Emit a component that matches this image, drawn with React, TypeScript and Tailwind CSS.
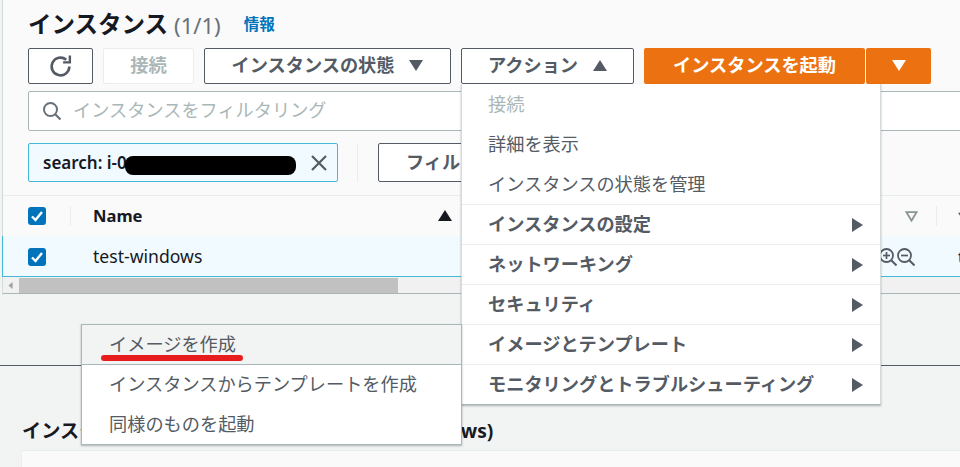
import React from "react";

const Tri = ({ d, className }: { d: "up" | "down" | "right"; className: string }) => {
  const p = d === "up" ? "M7 1 L14 12 L0 12 Z" : d === "down" ? "M0 1 L14 1 L7 12 Z" : "M1 0 L12 7 L1 14 Z";
  return (
    <svg viewBox="0 0 14 14" className={className} aria-hidden="true">
      <path d={p} fill="currentColor" />
    </svg>
  );
};

const Check = () => (
  <span className="flex h-[18px] w-[18px] shrink-0 items-center justify-center rounded-[3px] bg-[#0073bb]">
    <svg viewBox="0 0 18 18" className="h-[18px] w-[18px]" aria-hidden="true">
      <path d="M4 9.5 L7.5 13 L14 5" fill="none" stroke="#fff" strokeWidth="2.4" />
    </svg>
  </span>
);

const Zoom = ({ plus }: { plus?: boolean }) => (
  <svg viewBox="0 0 18 18" className="h-[18px] w-[18px] shrink-0 text-[#545b64]" aria-hidden="true">
    <circle cx="7.5" cy="7.5" r="6.5" fill="none" stroke="currentColor" strokeWidth="1.8" />
    <path d="M12.2 12.2 L17.5 17.5" stroke="currentColor" strokeWidth="2" />
    <path d="M4 7.5 H11" stroke="currentColor" strokeWidth="1.7" />
    {plus && <path d="M7.5 4 V11" stroke="currentColor" strokeWidth="1.7" />}
  </svg>
);

const Btn = ({ w, children }: { w: string; children: React.ReactNode }) => (
  <div className={`flex h-[36px] items-center justify-center rounded-[2px] border border-[#545b64] bg-white text-[18.2px] font-bold text-[#545b64] ${w}`}>
    {children}
  </div>
);

const actionPlain = ["詳細を表示", "インスタンスの状態を管理"];
const actionGroups = ["インスタンスの設定", "ネットワーキング", "セキュリティ", "イメージとテンプレート", "モニタリングとトラブルシューティング"];

export default function App() {
  return (
    <div
      className="relative flex h-[467px] w-[960px] flex-col overflow-hidden bg-[#f2f3f3] text-[#16191f]"
      style={{ fontFamily: '"Noto Sans", "Noto Sans CJK JP", sans-serif' }}
    >
      <div className="ml-[2px] h-[295px] shrink-0 border-l border-[#d5dbdb]">
        <div className="h-[195px] bg-[#fafafa] pl-[25px]">
          <div className="flex h-[48px] items-center pt-[2px]">
            <span className="text-[23.5px] font-bold leading-none">インスタンス</span>
            <span className="ml-[6px] text-[22px] leading-none text-[#687078]">(1/1)</span>
            <span className="ml-[23px] text-[15.5px] font-bold leading-none text-[#0073bb]">情報</span>
          </div>
          <div className="flex h-[36px] items-center">
            <Btn w="w-[65px]">
              <svg viewBox="0 0 24 24" className="h-[25px] w-[25px]" aria-hidden="true">
                <path d="M20.5 12 A8.5 8.5 0 1 1 17.5 5.5" fill="none" stroke="currentColor" strokeWidth="2.5" />
                <path d="M21 1.5 V8 H14.5" fill="none" stroke="currentColor" strokeWidth="2.3" />
              </svg>
            </Btn>
            <div className="ml-[10px] flex h-[36px] w-[91px] items-center justify-center rounded-[2px] border border-[#eaeded] bg-white text-[18.2px] font-bold text-[#aab7b8]">
              接続
            </div>
            <div className="ml-[10px]">
              <Btn w="w-[247px] gap-[15px]">
                <span>インスタンスの状態</span>
                <Tri d="down" className="h-[14px] w-[14px]" />
              </Btn>
            </div>
            <div className="ml-[10px]">
              <Btn w="w-[173px] gap-[15px]">
                <span>アクション</span>
                <Tri d="up" className="h-[14px] w-[14px]" />
              </Btn>
            </div>
            <div className="ml-[10px] flex h-[36px] w-[221px] items-center justify-center rounded-[2px] bg-[#ec7211] text-[18.2px] font-bold text-white">
              インスタンスを起動
            </div>
            <div className="ml-px flex h-[36px] w-[65px] items-center justify-center rounded-[2px] bg-[#ec7211] text-white">
              <Tri d="down" className="h-[14px] w-[14px]" />
            </div>
          </div>
          <div className="mt-[7px] flex h-[40px] w-[960px] items-center rounded-[2px] border border-[#aab7b8] bg-white pl-[13px]">
            <svg viewBox="0 0 20 20" className="h-[20px] w-[20px] text-[#687078]" aria-hidden="true">
              <circle cx="8.5" cy="8.5" r="6.5" fill="none" stroke="currentColor" strokeWidth="2" />
              <path d="M13.2 13.2 L18.5 18.5" stroke="currentColor" strokeWidth="2.2" />
            </svg>
            <span className="ml-[11px] text-[18.2px] text-[#aab7b8]">インスタンスをフィルタリング</span>
          </div>
          <div className="mt-[12px] flex h-[39px] items-center">
            <div className="flex h-[39px] w-[310px] items-center justify-between rounded-[2px] border border-[#44b9d6] bg-[#f1faff] pl-[14px] pr-[9px]">
              <span className="text-[17px] font-semibold leading-none">search: i-0</span>
              <svg viewBox="0 0 18 18" className="h-[18px] w-[18px] text-[#545b64]" aria-hidden="true">
                <path d="M2 2 L16 16 M16 2 L2 16" stroke="currentColor" strokeWidth="2.2" />
              </svg>
            </div>
            <div className="ml-[19px] h-[39px] w-px bg-[#eaeded]" />
            <div className="ml-[20px] flex h-[39px] w-[200px] items-center rounded-[2px] border border-[#545b64] bg-white pl-[27px] text-[18.2px] font-bold text-[#545b64]">
              フィルターをクリア
            </div>
          </div>
        </div>
        <div className="flex h-[41px] items-center border-t border-[#eaeded] bg-[#fafafa] pl-[25px]">
          <Check />
          <div className="ml-[24px] h-[20px] w-px shrink-0 bg-[#eaeded]" />
          <span className="ml-[22px] w-[49px] shrink-0 text-[16.6px] font-bold leading-none">Name</span>
          <Tri d="up" className="ml-[296px] h-[14px] w-[14px] shrink-0 text-[#16191f]" />
          <svg viewBox="0 0 14 12" className="ml-[453px] h-[11px] w-[13px] shrink-0 text-[#879596]" aria-hidden="true">
            <path d="M1.5 1.2 H12.5 L7 10.5 Z" fill="none" stroke="currentColor" strokeWidth="2" />
          </svg>
          <div className="ml-[18px] h-[20px] w-px shrink-0 bg-[#eaeded]" />
          <Tri d="down" className="ml-[21px] h-[9px] w-[9px] shrink-0 text-[#545b64]" />
        </div>
        <div className="-ml-px flex h-[41px] items-center border-b border-l border-[#44b9d6] bg-[#f1faff] pl-[25px] pt-[1px]">
          <Check />
          <span className="ml-[47px] w-[786px] shrink-0 text-[17.6px] leading-none">test-windows</span>
          <Zoom plus />
          <Zoom />
          <span className="ml-[43px] shrink-0 text-[16px] leading-none">t</span>
        </div>
        <div className="flex h-[17px] items-center border-b border-[#aab7b8] bg-[#f1f1f1] pl-[5px]">
          <svg viewBox="0 0 6 10" className="h-[7px] w-[5px] text-[#a3a3a3]" aria-hidden="true">
            <path d="M6 0 L0 5 L6 10 Z" fill="currentColor" />
          </svg>
          <div className="ml-[6px] h-[15px] w-[379px] bg-[#c1c1c1]" />
        </div>
      </div>

      <div className="h-[71px] shrink-0 border-b border-[#545b64]" />
      <div className="flex h-[84px] shrink-0 items-end pb-[10px] pl-[22px]">
        <span className="text-[19.2px] font-bold leading-none">インスタンス: i-0xxxxxxxxxxxxxxxx (test-windows)</span>
      </div>
      <div className="ml-[21px] flex-1 border-l border-t border-[#eaeded] bg-[#fafafa]" />

      {/* redaction */}
      <div className="absolute left-[125px] top-[156px] h-[19px] w-[171px] rounded-[8px] bg-black" />

      {/* actions menu */}
      <div className="absolute left-[461px] top-[84px] w-[420px] border-r border-b border-l border-[#d5dbdb] border-b-[#aab7b8] bg-white text-[18.2px] text-[#545b64] shadow-[0_1px_2px_rgba(0,28,36,0.3)]">
        <div className="flex h-[40px] items-center pl-[26px] pt-[2px] text-[#aab7b8]">接続</div>
        {actionPlain.map((t) => (
          <div key={t} className="flex h-[40px] items-center pl-[26px] pt-[1px]">{t}</div>
        ))}
        {actionGroups.map((t) => (
          <div key={t} className="flex h-[40px] items-center justify-between border-t border-[#eaeded] pl-[26px] pr-[15px] font-bold">
            <span>{t}</span>
            <Tri d="right" className="h-[14px] w-[14px]" />
          </div>
        ))}
      </div>

      {/* image submenu */}
      <div className="absolute left-[81px] top-[324px] w-[381px] border border-[#aab7b8] bg-white text-[18.2px] text-[#545b64] shadow-[0_1px_2px_rgba(0,28,36,0.3)]">
        <div className="flex h-[40px] items-center border-b border-[#aab7b8] bg-[#f2f3f3] pl-[27px]">イメージを作成</div>
        <div className="flex h-[40px] items-center pl-[27px]">インスタンスからテンプレートを作成</div>
        <div className="flex h-[39px] items-center pl-[27px]">同様のものを起動</div>
      </div>

      {/* red annotation */}
      <div className="absolute left-[101px] top-[355px] h-[6px] w-[142px] rounded-full bg-[#e71c1c]" />
    </div>
  );
}
